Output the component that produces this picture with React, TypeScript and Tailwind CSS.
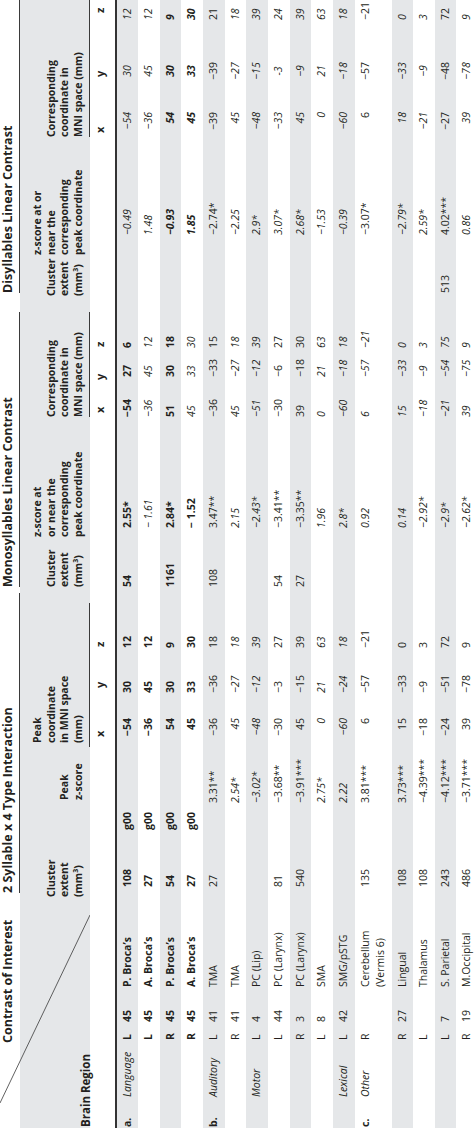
import React from "react";

type Sty = "" | "b" | "i" | "bi";

interface Row {
  cat?: string;
  grp?: string;
  side: string;
  ba: string;
  region: string[];
  rb?: boolean;
  tall?: boolean;
  c2: string;
  s2: string[];
  t2: Sty;
  cm: string;
  sm: string[];
  tm: Sty;
  tmz?: Sty;
  cd: string;
  sd: string[];
  td: Sty;
}

const rows: Row[] = [
  { cat: "a.", grp: "Language", side: "L", ba: "45", region: ["P. Broca’s"], rb: true, c2: "108", s2: ["g00", "−54", "30", "12"], t2: "b", cm: "54", sm: ["2.55*", "−54", "27", "6"], tm: "b", cd: "", sd: ["−0.49", "−54", "30", "12"], td: "i" },
  { side: "L", ba: "45", region: ["A. Broca’s"], rb: true, c2: "27", s2: ["g00", "−36", "45", "12"], t2: "b", cm: "", sm: ["− 1.61", "−36", "45", "12"], tm: "i", cd: "", sd: ["1.48", "−36", "45", "12"], td: "i" },
  { side: "R", ba: "45", region: ["P. Broca’s"], rb: true, c2: "54", s2: ["g00", "54", "30", "9"], t2: "b", cm: "1161", sm: ["2.84*", "51", "30", "18"], tm: "b", cd: "", sd: ["−0.93", "54", "30", "9"], td: "bi" },
  { side: "R", ba: "45", region: ["A. Broca’s"], rb: true, c2: "27", s2: ["g00", "45", "33", "30"], t2: "b", cm: "", sm: ["− 1.52", "45", "33", "30"], tm: "i", tmz: "b", cd: "", sd: ["1.85", "45", "33", "30"], td: "bi" },
  { cat: "b.", grp: "Auditory", side: "L", ba: "41", region: ["TMA"], c2: "27", s2: ["3.31**", "−36", "−36", "18"], t2: "", cm: "108", sm: ["3.47**", "−36", "−33", "15"], tm: "", cd: "", sd: ["−2.74*", "−39", "−39", "21"], td: "" },
  { side: "R", ba: "41", region: ["TMA"], c2: "", s2: ["2.54*", "45", "−27", "18"], t2: "i", cm: "", sm: ["2.15", "45", "−27", "18"], tm: "i", cd: "", sd: ["−2.25", "45", "−27", "18"], td: "i" },
  { grp: "Motor", side: "L", ba: "4", region: ["PC (Lip)"], c2: "", s2: ["−3.02*", "−48", "−12", "39"], t2: "i", cm: "", sm: ["−2.43*", "−51", "−12", "39"], tm: "i", cd: "", sd: ["2.9*", "−48", "−15", "39"], td: "i" },
  { side: "L", ba: "44", region: ["PC (Larynx)"], c2: "81", s2: ["−3.68**", "−30", "−3", "27"], t2: "", cm: "54", sm: ["−3.41**", "−30", "−6", "27"], tm: "", cd: "", sd: ["3.07*", "−33", "-3", "24"], td: "i" },
  { side: "R", ba: "3", region: ["PC (Larynx)"], c2: "540", s2: ["−3.91***", "45", "−15", "39"], t2: "", cm: "27", sm: ["−3.35**", "39", "−18", "30"], tm: "", cd: "", sd: ["2.68*", "45", "−9", "39"], td: "i" },
  { side: "L", ba: "8", region: ["SMA"], c2: "", s2: ["2.75*", "0", "21", "63"], t2: "i", cm: "", sm: ["1.96", "0", "21", "63"], tm: "i", cd: "", sd: ["−1.53", "0", "21", "63"], td: "i" },
  { grp: "Lexical", side: "L", ba: "42", region: ["SMG/pSTG"], c2: "", s2: ["2.22", "−60", "−24", "18"], t2: "i", cm: "", sm: ["2.8*", "−60", "−18", "18"], tm: "i", cd: "", sd: ["−0.39", "−60", "−18", "18"], td: "i" },
  { cat: "c.", grp: "Other", side: "R", ba: "", region: ["Cerebellum", "(Vermis 6)"], tall: true, c2: "135", s2: ["3.81***", "6", "−57", "−21"], t2: "", cm: "", sm: ["0.92", "6", "−57", "−21"], tm: "i", cd: "", sd: ["−3.07*", "6", "−57", "−21"], td: "" },
  { side: "R", ba: "27", region: ["Lingual"], c2: "108", s2: ["3.73***", "15", "−33", "0"], t2: "", cm: "", sm: ["0.14", "15", "−33", "0"], tm: "i", cd: "", sd: ["−2.79*", "18", "−33", "0"], td: "i" },
  { side: "L", ba: "", region: ["Thalamus"], c2: "108", s2: ["−4.39***", "−18", "−9", "3"], t2: "", cm: "", sm: ["−2.92*", "−18", "−9", "3"], tm: "i", cd: "", sd: ["2.59*", "−21", "−9", "3"], td: "i" },
  { side: "L", ba: "7", region: ["S. Parietal"], c2: "243", s2: ["−4.12***", "−24", "−51", "72"], t2: "", cm: "", sm: ["−2.9*", "−21", "−54", "75"], tm: "i", cd: "513", sd: ["4.02***", "−27", "−48", "72"], td: "" },
  { side: "R", ba: "19", region: ["M.Occipital"], c2: "486", s2: ["−3.71***", "39", "−78", "9"], t2: "", cm: "", sm: ["−2.62*", "39", "−75", "9"], tm: "i", cd: "", sd: ["0.86", "39", "−78", "9"], td: "i" },
];

const sty = (s: Sty) =>
  s === "b" ? "font-bold" : s === "i" ? "italic" : s === "bi" ? "font-bold italic" : "";

function DataRow({ r, gray }: { r: Row; gray: boolean }) {
  const base = r.rb ? "font-bold" : "";
  const a = sty(r.t2);
  const m = sty(r.tm);
  const d = sty(r.td);
  return (
    <div
      className={`flex shrink-0 whitespace-nowrap pt-[3px] leading-[15px] ${r.tall ? "h-[37px]" : "h-[21.65px]"} ${gray ? "bg-[#e5e7e9]" : "bg-white"}`}
    >
      <div className="w-[31px] shrink-0 pl-[1px] font-bold">{r.cat}</div>
      <div className="w-[57px] shrink-0 italic">{r.grp}</div>
      <div className={`w-[18px] shrink-0 ${base}`}>{r.side}</div>
      <div className={`w-[35px] shrink-0 ${base}`}>{r.ba}</div>
      <div className={`w-[100px] shrink-0 ${base}`}>
        {r.region.map((t) => (
          <div key={t}>{t}</div>
        ))}
      </div>
      <div className={`w-[57px] shrink-0 ${a}`}>{r.c2}</div>
      {/* 2 syllable x 4 type */}
      <div className={`w-[82px] shrink-0 ${a} ${r.s2[0] === "g00" ? "" : "pl-[27px]"}`}>{r.s2[0]}</div>
      <div className={`w-[30px] shrink-0 text-right ${a}`}>{r.s2[1]}</div>
      <div className={`w-[70px] shrink-0 pl-[25px] ${a}`}>{r.s2[2]}</div>
      <div className={`w-[61px] shrink-0 ${a}`}>{r.s2[3]}</div>
      {/* monosyllables */}
      <div className={`w-[50px] shrink-0 ${m}`}>{r.cm}</div>
      <div className={`w-[120px] shrink-0 pl-[9px] ${r.tmz ? sty(r.tmz) : m}`}>{r.sm[0]}</div>
      <div className={`w-[40px] shrink-0 ${m}`}>{r.sm[1]}</div>
      <div className={`w-[29px] shrink-0 ${m}`}>{r.sm[2]}</div>
      <div className={`w-[55px] shrink-0 ${m}`}>{r.sm[3]}</div>
      {/* disyllables */}
      <div className={`w-[36px] shrink-0 ${d}`}>{r.cd}</div>
      <div className={`w-[120px] shrink-0 pl-[22px] ${d}`}>{r.sd[0]}</div>
      <div className={`w-[25px] shrink-0 text-right ${d}`}>{r.sd[1]}</div>
      <div className={`w-[82px] shrink-0 text-center ${d}`}>{r.sd[2]}</div>
      <div className={`w-[30px] shrink-0 pl-[10px] ${d}`}>{r.sd[3]}</div>
    </div>
  );
}

const Mm3 = () => (
  <>
    (mm<sup className="text-[7px]">3</sup>)
  </>
);

function Header() {
  return (
    <div className="flex shrink-0">
      <div className="relative w-[231px] shrink-0">
        <div className="h-[20px] pl-[85px] text-[12.5px] font-bold leading-[16px]">Contrast of Interest</div>
        <div className="h-[70px] bg-[#e5e7e9] pl-[1px] pt-[59px] text-[11.5px] font-bold leading-[14px]">
          Brain Region
        </div>
        <svg className="absolute left-0 top-0" width="231" height="90">
          <line x1="25" y1="0" x2="213" y2="90" stroke="#3a3a3a" strokeWidth="0.8" />
        </svg>
      </div>
      <div className="w-[897px] shrink-0">
        <div className="flex h-[20px] whitespace-nowrap text-[12.5px] font-bold leading-[16px]">
          <div className="ml-[4px] w-[300px] border-b border-[#3a3a3a]">2 Syllable x 4 Type Interaction</div>
          <div className="ml-[6px] w-[275px] border-b border-[#3a3a3a]">Monosyllables Linear Contrast</div>
          <div className="ml-[19px] w-[293px] border-b border-[#3a3a3a]">Disyllables Linear Contrast</div>
        </div>
        <div className="flex h-[70px] whitespace-nowrap bg-[#e5e7e9] text-[10.5px] font-bold leading-[13.5px]">
          <div className="flex w-[67px] shrink-0 flex-col justify-end pb-[5px]">
            <div>Cluster</div>
            <div>extent</div>
            <div><Mm3 /></div>
          </div>
          <div className="flex w-[82px] shrink-0 flex-col justify-end pb-[5px] pl-[30px]">
            <div>Peak</div>
            <div>z-score</div>
          </div>
          <div className="w-[161px] shrink-0">
            <div className="ml-[1px] flex h-full w-[144px] flex-col justify-end border-b border-[#3a3a3a] pb-[4px] pl-[4px]">
              <div>Peak</div>
              <div>coordinate</div>
              <div>in MNI space</div>
              <div>(mm)</div>
            </div>
          </div>
          <div className="flex w-[50px] shrink-0 flex-col justify-end pb-[5px]">
            <div>Cluster</div>
            <div>extent</div>
            <div><Mm3 /></div>
          </div>
          <div className="flex w-[120px] shrink-0 flex-col justify-end pb-[5px]">
            <div>z-score at</div>
            <div>or near the</div>
            <div>corresponding</div>
            <div>peak coordinate</div>
          </div>
          <div className="w-[124px] shrink-0">
            <div className="flex h-full w-[105px] flex-col justify-end border-b border-[#3a3a3a] pb-[4px]">
              <div>Corresponding</div>
              <div>coordinate in</div>
              <div>MNI space (mm)</div>
            </div>
          </div>
          <div className="-ml-[3px] flex w-[39px] shrink-0 flex-col justify-end pb-[5px]">
            <div>Cluster</div>
            <div>extent</div>
            <div><Mm3 /></div>
          </div>
          <div className="flex w-[120px] shrink-0 flex-col justify-end pb-[5px] pl-[2px]">
            <div>z-score at or</div>
            <div>near the</div>
            <div>corresponding</div>
            <div>peak coordinate</div>
          </div>
          <div className="flex w-[137px] shrink-0 flex-col justify-end border-b border-[#3a3a3a] pb-[4px]">
            <div>Corresponding</div>
            <div>coordinate in</div>
            <div>MNI space (mm)</div>
          </div>
        </div>
      </div>
    </div>
  );
}

function XyzRow() {
  return (
    <div className="flex h-[25px] shrink-0 pt-[2px] text-[11px] font-bold leading-[16px]">
      <div className="w-[391px] shrink-0" />
      <div className="w-[49px] shrink-0">x</div>
      <div className="w-[41px] shrink-0">y</div>
      <div className="w-[234px] shrink-0">z</div>
      <div className="w-[33px] shrink-0">x</div>
      <div className="w-[33px] shrink-0">y</div>
      <div className="w-[214px] shrink-0">z</div>
      <div className="w-[56px] shrink-0">x</div>
      <div className="w-[64px] shrink-0">y</div>
      <div className="shrink-0">z</div>
    </div>
  );
}

export default function App() {
  return (
    <div className="relative h-[1128px] w-[474px] overflow-hidden bg-white">
      <div className="flex h-[474px] w-[1128px] origin-top-left translate-y-[1128px] -rotate-90 flex-col overflow-hidden font-['Open_Sans','Noto_Sans',sans-serif] text-[10.5px] text-[#231f20]">
        <Header />
        <XyzRow />
        <div className="h-[1.5px] shrink-0 bg-[#333]" />
        {rows.map((r, i) => (
          <DataRow key={i} r={r} gray={i % 2 === 0} />
        ))}
      </div>
    </div>
  );
}
